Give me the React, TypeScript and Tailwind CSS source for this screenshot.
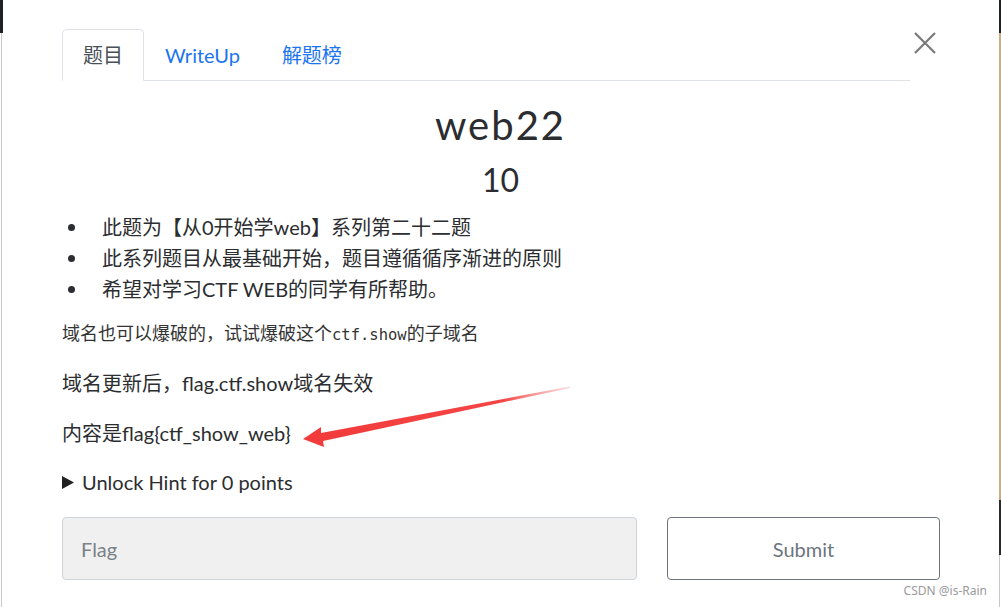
const bullets = [
  "此题为【从0开始学web】系列第二十二题",
  "此系列题目从最基础开始，题目遵循循序渐进的原则",
  "希望对学习CTF WEB的同学有所帮助。",
];

const tabs = [
  { label: "题目", active: true },
  { label: "WriteUp", active: false },
  { label: "解题榜", active: false },
];

function CloseIcon() {
  return (
    <svg width="22" height="22" viewBox="0 0 22 22" className="shrink-0">
      <path d="M1 1 L21 21 M21 1 L1 21" stroke="#7a7a7a" strokeWidth="2.2" fill="none" />
    </svg>
  );
}

function Arrow() {
  return (
    <svg
      className="pointer-events-none absolute left-0 top-0"
      width="1001"
      height="607"
      viewBox="0 0 1001 607"
    >
      <defs>
        <linearGradient id="arrowFade" x1="303" y1="439" x2="570" y2="387" gradientUnits="userSpaceOnUse">
          <stop offset="0" stopColor="#f23a3a" />
          <stop offset="0.75" stopColor="#f44545" />
          <stop offset="1" stopColor="#f8a0a0" stopOpacity="0.4" />
        </linearGradient>
      </defs>
      <polygon
        points="303,439 321,427 321,433 570,386.5 570,388 323,441 324,447"
        fill="url(#arrowFade)"
      />
    </svg>
  );
}

export default function App() {
  return (
    <div
      className="relative flex h-[607px] w-[1001px] overflow-hidden bg-white text-[#212529]"
      style={{ fontFamily: 'Lato, "Noto Sans CJK SC", sans-serif' }}
    >
      {/* left window edge */}
      <div className="flex w-[3px] shrink-0 flex-col">
        <div className="h-[33px] bg-[#1f2224]" />
        <div className="ml-px w-px flex-1 bg-[#c8c8c8]" />
      </div>

      <div className="flex min-w-0 flex-1 flex-col">
        {/* header */}
        <div className="flex items-start pl-[59px] pt-[29px]">
          <ul className="flex w-[848px] border-b border-[#dee2e6]">
            {tabs.map((t) => (
              <li
                key={t.label}
                className={
                  t.active
                    ? "-mb-px rounded-t-[5px] border border-[#dee2e6] border-b-white bg-white px-5 py-[10px] text-[20px] leading-[30px] text-[#495057]"
                    : "-mb-px border border-transparent px-5 py-[10px] text-[20px] leading-[30px] text-[#1b74f0]"
                }
              >
                {t.label}
              </li>
            ))}
          </ul>
          <div className="ml-[4px] mt-[3px]">
            <CloseIcon />
          </div>
        </div>

        {/* challenge */}
        <h2 className="mt-[20px] text-center text-[40px] leading-[48px] tracking-[2px] text-[#2b2d30]">
          web22
        </h2>
        <h3 className="mt-[12px] text-center text-[32px] leading-[38px] text-[#2b2d30]">10</h3>

        <ul className="ml-[59px] mt-[13px] flex flex-col">
          {bullets.map((b) => (
            <li key={b} className="flex items-center text-[20px] leading-[31px] text-[#2b2d30]">
              <span className="ml-[6px] h-[7px] w-[7px] rounded-full bg-[#2b2d30]" />
              <span className="ml-[27px]">{b}</span>
            </li>
          ))}
        </ul>

        <p
          className="ml-[59px] mt-[14px] text-[18px] leading-[27px] text-[#333]"
          style={{ fontFamily: '"Noto Sans CJK SC", sans-serif' }}
        >
          域名也可以爆破的，试试爆破这个
          <span className="text-[15.5px]" style={{ fontFamily: '"DejaVu Sans Mono", monospace' }}>
            ctf.show
          </span>
          的子域名
        </p>

        <p className="ml-[59px] mt-[19px] text-[20px] leading-[30px] text-[#2b2d30]">
          域名更新后，flag.ctf.show域名失效
        </p>
        <p className="ml-[59px] mt-[20px] text-[20px] leading-[30px] text-[#2b2d30]">
          内容是flag{"{ctf_show_web}"}
        </p>

        <div className="ml-[59px] mt-[19px] flex items-center text-[20px] leading-[30px] text-[#2b2d30]">
          <svg width="12" height="13" viewBox="0 0 12 13">
            <polygon points="0,0 12,6.5 0,13" fill="#222" />
          </svg>
          <span className="ml-[8px]">Unlock Hint for 0 points</span>
        </div>

        <div className="ml-[59px] mt-[20px] flex gap-[30px]">
          <div className="flex h-[63px] w-[575px] items-center rounded-[4px] border border-[#ced4da] bg-[#f0f0f0] pl-[18px] text-[20px] text-[#7b8288]">
            Flag
          </div>
          <div className="flex h-[63px] w-[273px] items-center justify-center rounded-[4px] border border-[#6c757d] bg-white text-[20px] text-[#6c757d]">
            Submit
          </div>
        </div>
      </div>

      {/* right window edge */}
      <div className="flex w-[3px] shrink-0 flex-col items-center">
        <div className="h-[33px] w-[2px] bg-[#1f2224]" />
        <div className="h-[467px] w-[2px] bg-[#c4b088]" />
        <div className="h-[55px] w-[2px] bg-[#2a2a2a]" />
        <div className="w-px flex-1 bg-[#c8c8c8]" />
      </div>

      <Arrow />
      <span
        className="absolute bottom-[7px] right-[14px] text-[12px] text-[#9a9a9a]"
        style={{ fontFamily: '"Noto Sans", sans-serif' }}
      >
        CSDN @is-Rain
      </span>
    </div>
  );
}
